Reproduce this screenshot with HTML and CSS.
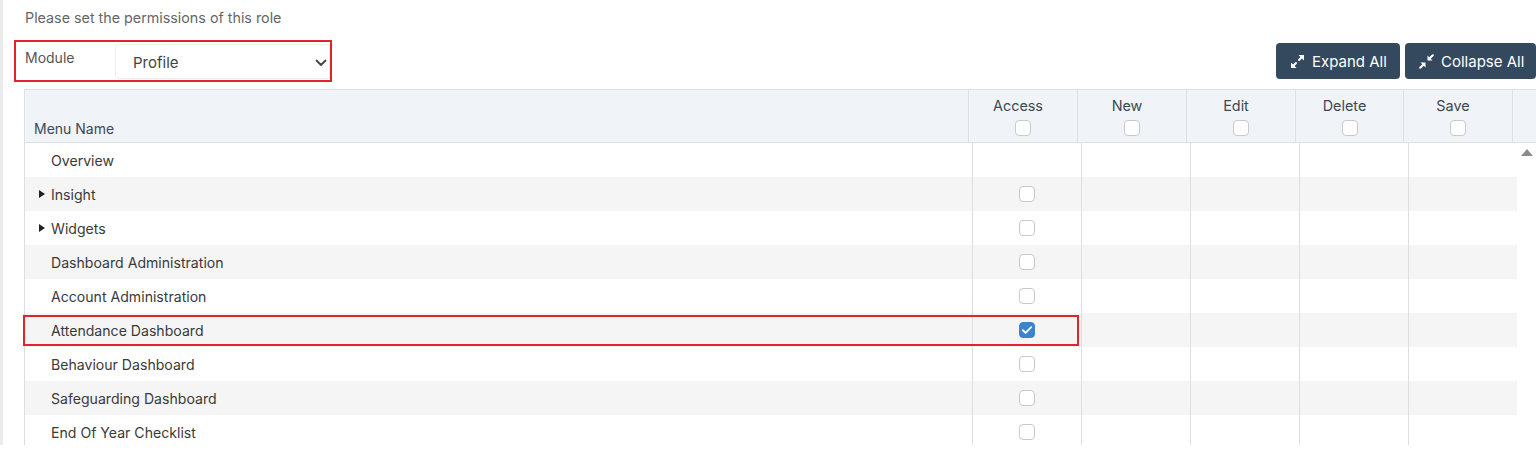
FILE: index.html
```html
<!DOCTYPE html>
<html lang="en">
<head>
<meta charset="utf-8">
<title>Role permissions</title>
<link rel="stylesheet" href="styles.css">
</head>
<body>
<div class="frame">
  <div class="content">
    <p class="intro">Please set the permissions of this role</p>
    <div class="toolbar">
      <div class="module-field">
        <span class="module-label">Module</span>
        <div class="select">
          <span class="select-value">Profile</span>
          <svg class="chevron" width="12" height="8" viewBox="0 0 12 8"><path d="M1.5 1.5 L6 6 L10.5 1.5" fill="none" stroke="#444" stroke-width="1.8" stroke-linecap="round" stroke-linejoin="round"/></svg>
        </div>
      </div>
      <div class="actions">
        <button class="btn btn-expand">
          <svg class="btn-icon" width="15" height="15" viewBox="0 0 15 15"><path d="M8.5 1 H14 V6.5 Z" fill="#fff"/><path d="M12.2 2.8 L9 6" stroke="#fff" stroke-width="2" stroke-linecap="round"/><path d="M1 8.5 V14 H6.5 Z" fill="#fff"/><path d="M2.8 12.2 L6 9" stroke="#fff" stroke-width="2" stroke-linecap="round"/></svg>
          <span>Expand All</span>
        </button>
        <button class="btn btn-collapse">
          <svg class="btn-icon" width="15" height="15" viewBox="0 0 15 15"><path d="M8.5 6.5 V1.5 L13.5 6.5 Z" fill="#fff"/><path d="M10.5 4.5 L13.8 1.2" stroke="#fff" stroke-width="2" stroke-linecap="round"/><path d="M6.5 8.5 V13.5 L1.5 8.5 Z" fill="#fff"/><path d="M4.5 10.5 L1.2 13.8" stroke="#fff" stroke-width="2" stroke-linecap="round"/></svg>
          <span>Collapse All</span>
        </button>
      </div>
    </div>

    <div class="grid">
      <div class="grid-head">
        <div class="hcell hname">Menu Name</div>
        <div class="hcell hperm"><span class="hlabel">Access</span><span class="cb"></span></div>
        <div class="hcell hperm"><span class="hlabel">New</span><span class="cb"></span></div>
        <div class="hcell hperm"><span class="hlabel">Edit</span><span class="cb"></span></div>
        <div class="hcell hperm"><span class="hlabel">Delete</span><span class="cb"></span></div>
        <div class="hcell hperm"><span class="hlabel">Save</span><span class="cb"></span></div>
        <div class="hcell hgutter"></div>
      </div>
      <div class="grid-body">
        <div class="rows">
          <div class="row">
            <div class="cell name"><span class="toggle"></span>Overview</div>
            <div class="cell perm"></div><div class="cell perm"></div><div class="cell perm"></div><div class="cell perm"></div><div class="cell perm"></div>
          </div>
          <div class="row alt">
            <div class="cell name"><span class="toggle"><i class="caret"></i></span>Insight</div>
            <div class="cell perm"><span class="cb"></span></div><div class="cell perm"></div><div class="cell perm"></div><div class="cell perm"></div><div class="cell perm"></div>
          </div>
          <div class="row">
            <div class="cell name"><span class="toggle"><i class="caret"></i></span>Widgets</div>
            <div class="cell perm"><span class="cb"></span></div><div class="cell perm"></div><div class="cell perm"></div><div class="cell perm"></div><div class="cell perm"></div>
          </div>
          <div class="row alt">
            <div class="cell name"><span class="toggle"></span>Dashboard Administration</div>
            <div class="cell perm"><span class="cb"></span></div><div class="cell perm"></div><div class="cell perm"></div><div class="cell perm"></div><div class="cell perm"></div>
          </div>
          <div class="row">
            <div class="cell name"><span class="toggle"></span>Account Administration</div>
            <div class="cell perm"><span class="cb"></span></div><div class="cell perm"></div><div class="cell perm"></div><div class="cell perm"></div><div class="cell perm"></div>
          </div>
          <div class="row alt marked">
            <div class="cell name"><span class="toggle"></span>Attendance Dashboard</div>
            <div class="cell perm"><span class="cb checked"><svg width="12" height="10" viewBox="0 0 12 10"><path d="M1.8 5.2 L4.6 7.8 L10.2 2.2" fill="none" stroke="#fff" stroke-width="1.9" stroke-linecap="round" stroke-linejoin="round"/></svg></span></div><div class="cell perm"></div><div class="cell perm"></div><div class="cell perm"></div><div class="cell perm"></div>
            <span class="highlight"></span>
          </div>
          <div class="row">
            <div class="cell name"><span class="toggle"></span>Behaviour Dashboard</div>
            <div class="cell perm"><span class="cb"></span></div><div class="cell perm"></div><div class="cell perm"></div><div class="cell perm"></div><div class="cell perm"></div>
          </div>
          <div class="row alt">
            <div class="cell name"><span class="toggle"></span>Safeguarding Dashboard</div>
            <div class="cell perm"><span class="cb"></span></div><div class="cell perm"></div><div class="cell perm"></div><div class="cell perm"></div><div class="cell perm"></div>
          </div>
          <div class="row">
            <div class="cell name"><span class="toggle"></span>End Of Year Checklist</div>
            <div class="cell perm"><span class="cb"></span></div><div class="cell perm"></div><div class="cell perm"></div><div class="cell perm"></div><div class="cell perm"></div>
          </div>
        </div>
        <div class="vscroll"><span class="scroll-up"></span></div>
      </div>
    </div>
  </div>
</div>
</body>
</html>
```

FILE: styles.css
```css
* { box-sizing: border-box; }

html, body {
  margin: 0;
  padding: 0;
  background: #fff;
  font-family: Inter, "Noto Sans", "Liberation Sans", sans-serif;
  color: #3a3a3a;
}

.frame {
  height: 445px;
  overflow: hidden;
  border-left: 3px solid #ebebeb;
  width: 1536px;
}

.content {
  padding: 10px 0 0 21px;
}

.intro {
  margin: 0 0 0 1px;
  font-size: 14.3px;
  line-height: 16px;
  color: #666;
}

.toolbar {
  margin-top: 14px;
  display: flex;
  justify-content: space-between;
  align-items: flex-start;
}

.module-field {
  margin-left: -10px;
  width: 318px;
  height: 42px;
  border: 2px solid #e3222b;
  display: flex;
  align-items: flex-start;
}

.module-label {
  width: 99px;
  padding: 8px 0 0 9px;
  font-size: 14px;
  line-height: 16px;
  color: #555;
}

.select {
  margin-top: 2px;
  width: 215px;
  height: 35px;
  border: 1px solid #efefef;
  border-radius: 4px 0 0 4px;
  display: flex;
  align-items: center;
  justify-content: space-between;
  padding: 0 2px 0 17px;
}

.select-value {
  font-size: 15px;
  color: #444;
  padding-top: 2px;
}

.chevron { margin-top: 2px; }

.actions {
  margin-top: 3px;
  display: flex;
  gap: 5px;
}

.btn {
  height: 36px;
  border: 0;
  border-radius: 4px;
  background: #34495e;
  color: #fff;
  font-family: inherit;
  font-size: 15px;
  display: flex;
  align-items: center;
  gap: 7px;
  padding: 0 0 0 14px;
  cursor: pointer;
}

.btn-expand { width: 124px; }
.btn-collapse { width: 131px; }

.btn-icon { flex: none; }

/* grid */
.grid {
  margin-top: 7px;
}

.grid-head {
  display: grid;
  grid-template-columns: 943px 109px 109px 109px 108px 109px 24px;
  height: 54px;
  background: #f0f3f8;
  border-top: 1px solid #dcdfe3;
  border-bottom: 1px solid #dcdfe3;
  border-left: 1px solid #dcdfe3;
}

.hcell {
  font-size: 14px;
  line-height: 17px;
  color: #3f4852;
}

.hname {
  align-self: end;
  padding: 0 0 5px 9px;
}

.hperm, .hgutter {
  border-left: 1px solid #dcdfe3;
}

.hperm {
  display: flex;
  flex-direction: column;
  align-items: center;
  padding-top: 7px;
  gap: 6px;
}

.hlabel {
  font-size: 14.4px;
  padding-right: 10px;
}

.cb {
  width: 16px;
  height: 16px;
  border: 1px solid #c9c9c9;
  border-radius: 4px;
  background: #fff;
  display: inline-flex;
  align-items: center;
  justify-content: center;
}

.cb.checked {
  background: #3d82cc;
  border-color: #3d82cc;
}

.grid-body {
  display: flex;
}

.rows {
  width: 1493px;
  border-left: 1px solid #dcdcdc;
}

.row {
  position: relative;
  display: grid;
  grid-template-columns: 947px 109px 109px 109px 109px 109px;
  height: 34px;
  background: #fff;
}

.row.alt { background: #f5f5f5; }

.cell {
  display: flex;
  align-items: center;
}

.name {
  padding-left: 14px;
  font-size: 14.1px;
  color: #3a3a3a;
}

.toggle {
  width: 12px;
  height: 10px;
  display: inline-flex;
  align-items: center;
}

.caret {
  width: 0;
  height: 0;
  border-left: 6px solid #222;
  border-top: 4px solid transparent;
  border-bottom: 4px solid transparent;
}

.perm {
  justify-content: center;
  border-left: 1px solid #dedede;
}

.highlight {
  position: absolute;
  left: -2px;
  top: 2px;
  width: 1056px;
  height: 31px;
  border: 2px solid #e3222b;
  pointer-events: none;
}

.vscroll {
  width: 19px;
  display: flex;
  justify-content: center;
  padding-top: 6px;
}

.scroll-up {
  width: 0;
  height: 0;
  border-left: 6px solid transparent;
  border-right: 6px solid transparent;
  border-bottom: 7px solid #8a8a8a;
}
```
